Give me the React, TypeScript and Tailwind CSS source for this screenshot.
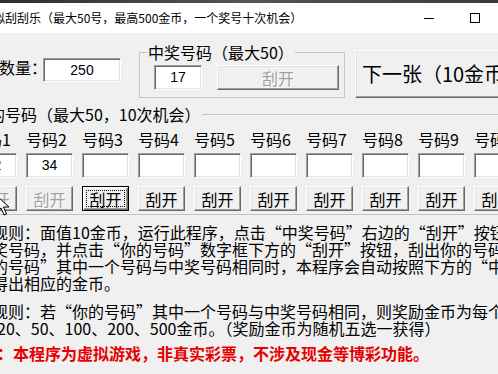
import React from 'react';

const cjk = "font-['Noto_Sans_CJK_SC','Noto_Sans_CJK_JP',sans-serif]";

const fieldCls =
  "bg-white border border-t-[#a0a0a0] border-l-[#a0a0a0] border-r-white border-b-white shadow-[inset_1px_1px_0_#696969,inset_-1px_-1px_0_#e3e3e3] flex items-center justify-center font-['Liberation_Sans',sans-serif] text-[14px] text-black";

const buttonCls =
  "relative bg-[#f0f0f0] border border-t-white border-l-white border-r-[#696969] border-b-[#696969] shadow-[inset_-1px_-1px_0_#a0a0a0,inset_1px_1px_0_#e3e3e3] flex items-center justify-center text-[16px] leading-[20px]";

function Field({ value, className }: { value?: string; className: string }) {
  return <div className={`${fieldCls} ${className}`}>{value}</div>;
}

function ScratchButton({ state }: { state: 'disabled' | 'focus' | 'normal' }) {
  if (state === 'focus') {
    return (
      <div className="relative h-[25px] w-[47px] bg-[#f0f0f0] border border-black shadow-[inset_1px_1px_0_#ffffff,inset_-1px_-1px_0_#696969,inset_-2px_-2px_0_#a0a0a0] flex items-center justify-center text-[16px] leading-[20px] text-black">
        <span className="absolute inset-[3px] border border-dotted border-black" />
        刮开
      </div>
    );
  }
  return (
    <div
      className={`${buttonCls} h-[25px] w-[47px] ${
        state === 'disabled' ? 'text-[#a0a0a0] [text-shadow:1px_1px_0_#ffffff]' : 'text-black'
      }`}
    >
      刮开
    </div>
  );
}

const columns = [
  { label: '号码1', value: '12', state: 'disabled' as const },
  { label: '号码2', value: '34', state: 'disabled' as const },
  { label: '号码3', value: '', state: 'focus' as const },
  { label: '号码4', value: '', state: 'normal' as const },
  { label: '号码5', value: '', state: 'normal' as const },
  { label: '号码6', value: '', state: 'normal' as const },
  { label: '号码7', value: '', state: 'normal' as const },
  { label: '号码8', value: '', state: 'normal' as const },
  { label: '号码9', value: '', state: 'normal' as const },
  { label: '号码10', value: '', state: 'normal' as const },
];

export default function App() {
  return (
    <div className={`relative w-[498px] h-[374px] overflow-hidden bg-[#f0f0f0] text-black ${cjk}`}>
      {/* desktop strip above the window */}
      <div className="h-[3px] bg-gradient-to-r from-[#2e2e2e] via-[#555555] to-[#3a3a3a]" />

      {/* title bar */}
      <div className="flex w-[544px] h-[30px] bg-white">
        <div className="flex-1 min-w-0 flex items-center ml-[-19px] whitespace-nowrap text-[12px] leading-[16px]">
          模拟刮刮乐（最大50号，最高500金币，一个奖号十次机会）
        </div>
        <div className="w-[46px] shrink-0 flex items-center justify-center">
          <div className="w-[10px] h-px bg-black" />
        </div>
        <div className="w-[46px] shrink-0 flex items-center justify-center">
          <div className="w-[10px] h-[10px] border border-black" />
        </div>
        <div className="w-[46px] shrink-0" />
      </div>

      {/* top row */}
      <div className="flex items-start h-[65px] w-[600px]">
        <div className="ml-[-33px] w-[76px] mt-[22px] whitespace-nowrap text-[16px] leading-[24px]">
          金币数量：
        </div>
        <Field value="250" className="w-[78px] h-[24px] mt-[25px]" />

        <div className="relative ml-[18px] mt-[19px] w-[206px] h-[46px] border border-[#c4c4c4] pt-[12px] pl-[14px] flex items-start">
          <span className="absolute left-[7px] top-[-11px] px-[1px] bg-[#f0f0f0] whitespace-nowrap text-[16px] leading-[20px]">
            中奖号码（最大50）
          </span>
          <Field value="17" className="w-[48px] h-[25px]" />
          <div className={`${buttonCls} ml-[15px] w-[122px] h-[25px] text-[#a0a0a0] [text-shadow:1px_1px_0_#ffffff]`}>
            刮开
          </div>
        </div>

        <div className={`${buttonCls} ml-[10px] mt-[17px] w-[176px] h-[48px] text-[20px] leading-[26px] text-black whitespace-nowrap`}>
          下一张（10金币）
        </div>
      </div>

      {/* your numbers group */}
      <div className="relative mt-[16px] ml-[-40px] w-[600px] border border-[#c4c4c4] pt-[14px] pb-[3px] pl-[9px]">
        <span className="absolute left-[11px] top-[-11px] px-[1px] bg-[#f0f0f0] whitespace-nowrap text-[16px] leading-[20px]">
          你的号码（最大50，10次机会）
        </span>
        <div className="flex gap-[9px]">
          {columns.map((c) => (
            <div key={c.label} className="w-[47px] shrink-0 flex flex-col">
              <div className="whitespace-nowrap text-[16px] leading-[20px]">{c.label}</div>
              <Field value={c.value} className="mt-[4px] w-[47px] h-[25px]" />
              <div className="mt-[8px]">
                <ScratchButton state={c.state} />
              </div>
            </div>
          ))}
        </div>
      </div>

      {/* rules */}
      <div className="mt-[9px] ml-[-8px] text-[16px] whitespace-nowrap">
        <div className="leading-[17px]">
          <div>规则：面值10金币，运行此程序，点击“中奖号码”右边的“刮开”按钮，刮出中</div>
          <div>奖号码，并点击“你的号码”数字框下方的“刮开”按钮，刮出你的号码。当“你</div>
          <div>的号码”其中一个号码与中奖号码相同时，本程序会自动按照下方的“中奖规则”获</div>
          <div>得出相应的金币。</div>
        </div>
        <div className="mt-[11px] leading-[17px]">
          <div>规则：若“你的号码”其中一个号码与中奖号码相同，则奖励金币为每个10、</div>
          <div className="ml-[5px]">20、50、100、200、500金币。（奖励金币为随机五选一获得）</div>
        </div>
        <div className="mt-[8px] ml-[5px] leading-[17px] font-bold text-[#e60000]">
          ：本程序为虚拟游戏，非真实彩票，不涉及现金等博彩功能。
        </div>
      </div>

      {/* mouse pointer */}
      <svg
        className="absolute left-[-4px] top-[195px]"
        width="14"
        height="22"
        viewBox="0 0 14 22"
      >
        <path
          d="M1 1 L1 17 L5 13 L8 20 L10.5 19 L7.5 12 L13 12 Z"
          fill="#ffffff"
          stroke="#000000"
          strokeWidth="1"
          strokeLinejoin="miter"
        />
      </svg>
    </div>
  );
}
